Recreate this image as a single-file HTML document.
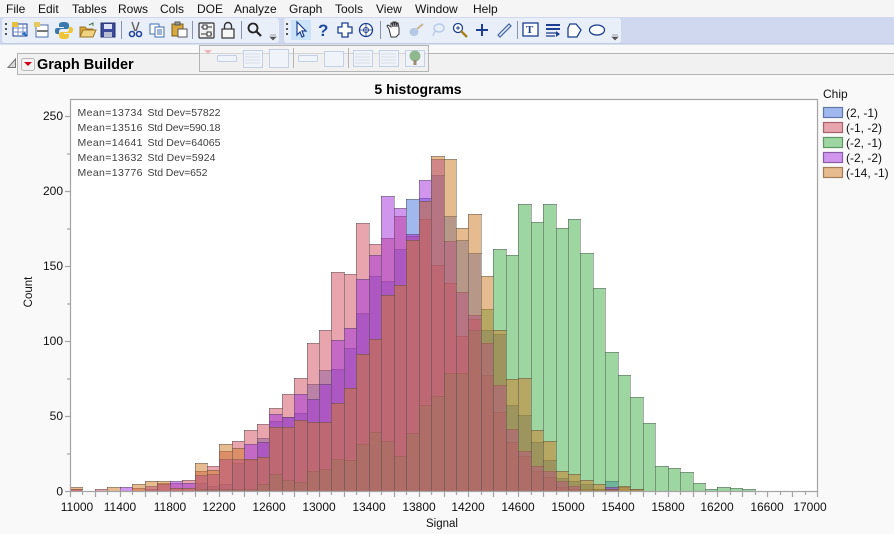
<!DOCTYPE html>
<html><head><meta charset="utf-8">
<style>
html,body{margin:0;padding:0;width:894px;height:534px;overflow:hidden;background:#f9f9f9;font-family:"Liberation Sans",sans-serif;color:#000}
.abs{position:absolute;white-space:pre}
#menu{position:absolute;left:0;top:0;width:894px;height:17px;background:#f5f5f5}
#menu span{position:absolute;top:2px;font-size:12px;line-height:14px;color:#111}
svg{position:absolute;left:0;top:0}
</style></head><body>
<div id="menu">
<span style="left:6px">File</span><span style="left:38px">Edit</span><span style="left:72px">Tables</span><span style="left:118px">Rows</span><span style="left:160px">Cols</span><span style="left:197px">DOE</span><span style="left:234px">Analyze</span><span style="left:289px">Graph</span><span style="left:335px">Tools</span><span style="left:376px">View</span><span style="left:415px">Window</span><span style="left:473px">Help</span>
</div>
<svg width="894" height="534" viewBox="0 0 894 534">
<!-- toolbar -->
<rect x="0" y="17" width="894" height="27" fill="#cfd8ee"/>
<rect x="2" y="18" width="277" height="25" rx="3" fill="#e9eff9"/>
<rect x="284" y="18" width="337" height="25" rx="3" fill="#e9eff9"/>
<rect x="0" y="43.500" width="894" height="1" fill="#b9c3dc"/>
<g fill="#555"><rect x="5" y="23" width="2" height="2"/><rect x="5" y="28" width="2" height="2"/><rect x="5" y="33" width="2" height="2"/><rect x="286" y="23" width="2" height="2"/><rect x="286" y="28" width="2" height="2"/><rect x="286" y="33" width="2" height="2"/></g>
<g fill="#8a93a8"><rect x="121" y="21" width="1" height="18"/><rect x="192" y="21" width="1" height="18"/><rect x="241" y="21" width="1" height="18"/><rect x="380" y="21" width="1" height="18"/><rect x="517" y="21" width="1" height="18"/></g>
<!-- table icons -->
<rect x="13" y="24" width="14" height="12" fill="#fff" stroke="#1c3f8f"/><path d="M13 28h14M13 32h14M18 24v12M23 24v12" stroke="#7a92c8" fill="none"/><rect x="12" y="22" width="6" height="5" fill="#e8c040"/><path d="M21 34l6 2-2-4z" fill="#1c6fc8"/>
<rect x="36" y="25" width="12" height="12" fill="#fff" stroke="#4a6fa8"/><rect x="34" y="22" width="6" height="5" fill="#e8c860"/><path d="M37 31h11" stroke="#777" stroke-width="2"/>
<!-- python -->
<path d="M64 22c-4 0-5 1-5 3v2h5v1h-7c-2 0-2 2-2 3s0 3 2 3h2v-2c0-2 1-3 3-3h5c1 0 2-1 2-2v-2c0-2-2-3-5-3z" fill="#3b78ad"/>
<path d="M64 39c4 0 5-1 5-3v-2h-5v-1h7c2 0 2-2 2-3s0-3-2-3h-2v2c0 2-1 3-3 3h-5c-1 0-2 1-2 2v2c0 2 2 3 5 3z" fill="#f0c437"/>
<!-- open -->
<path d="M80 27h5l2 2h6v8H80z" fill="#d9a93e" stroke="#9a7420"/><path d="M80 37l3-7h13l-3 7z" fill="#f0d280" stroke="#9a7420"/><path d="M89 25l4-2v3" stroke="#3a7a3a" fill="none"/>
<!-- save -->
<rect x="101" y="23" width="14" height="14" fill="#3c4a9c" stroke="#222c6c"/><rect x="104" y="24" width="8" height="5" fill="#dfe4f4"/><rect x="104" y="32" width="8" height="5" fill="#b8bdd0"/>
<!-- scissors -->
<path d="M132 22l3 9M139 22l-3 9" stroke="#666" stroke-width="1.500" fill="none"/><circle cx="132" cy="34" r="2.500" fill="none" stroke="#23449c" stroke-width="1.600"/><circle cx="139" cy="34" r="2.500" fill="none" stroke="#23449c" stroke-width="1.600"/>
<!-- copy -->
<rect x="150" y="24" width="9" height="10" fill="#fff" stroke="#3d6fb0"/><rect x="155" y="27" width="9" height="10" fill="#fff" stroke="#3d6fb0"/><path d="M157 30h5M157 32h5M157 34h5" stroke="#3d6fb0"/>
<!-- paste -->
<rect x="172" y="24" width="11" height="12" fill="#d9a93e" stroke="#7a5c18"/><rect x="175" y="22" width="5" height="3" fill="#999" stroke="#555"/><rect x="178" y="29" width="9" height="8" fill="#fff" stroke="#555"/>
<!-- tune -->
<rect x="199" y="23" width="15" height="15" rx="1" fill="#f2f2f2" stroke="#333" stroke-width="1.200"/><path d="M201 27h11M201 34h11" stroke="#333"/><rect x="203" y="25" width="4" height="4" fill="#fff" stroke="#333"/><rect x="207" y="32" width="4" height="4" fill="#fff" stroke="#333"/>
<!-- lock -->
<rect x="222" y="29" width="12" height="9" fill="#f6f6f6" stroke="#333" stroke-width="1.200"/><path d="M224.500 29v-3a3.500 3.500 0 0 1 7 0v3" fill="none" stroke="#333" stroke-width="1.400"/>
<!-- search -->
<circle cx="253" cy="28" r="4.500" fill="none" stroke="#222" stroke-width="1.800"/><path d="M256 31l5 5" stroke="#222" stroke-width="2.200"/>
<!-- dropdowns -->
<path d="M270 35h6M270 37h6l-3 3z" fill="#555" stroke="#555" stroke-width=".6"/>
<path d="M612 35h6M612 37h6l-3 3z" fill="#555" stroke="#555" stroke-width=".6"/>
<!-- arrow -->
<rect x="291" y="20" width="20" height="20" fill="#cbe3f9"/>
<path d="M297 22v13l3-3 2 5 2-1-2-5h4z" fill="#fff" stroke="#1c3f8f" stroke-width="1.200"/>
<!-- help -->
<text x="318" y="36" font-family="Liberation Sans" font-size="17" font-weight="bold" fill="#1d4a9e">?</text>
<!-- cross -->
<path d="M342 23h6v4h4v6h-4v4h-6v-4h-4v-6h4z" fill="#fff" stroke="#1c3f8f" stroke-width="1.300"/>
<!-- target -->
<circle cx="366" cy="30" r="6.500" fill="#fff" stroke="#1c3f8f" stroke-width="1.300"/><circle cx="366" cy="30" r="2.500" fill="none" stroke="#1c3f8f"/><path d="M366 24v12M360 30h12" stroke="#1c3f8f" stroke-width=".8"/>
<!-- hand -->
<path d="M389 29l-2-3 1-1 3 2v-4h1l1 4v-5h1l1 5v-5h1l1 5v-4h1l1 5v6l-3 3h-5z" fill="#fff" stroke="#333" stroke-width="1"/>
<!-- brush, lasso -->
<path d="M423 24l-6 5" stroke="#c9b48c" stroke-width="2"/><ellipse cx="414" cy="32" rx="4.500" ry="4" fill="#b5c9e6"/>
<ellipse cx="439" cy="28" rx="5" ry="4" fill="none" stroke="#b5c9e6" stroke-width="1.400"/><path d="M435 31l-2 5" stroke="#b5c9e6" stroke-width="1.400"/>
<!-- zoom -->
<circle cx="458" cy="28" r="4.500" fill="#fff" stroke="#1c3f8f" stroke-width="1.300"/><path d="M456 28h4M458 26v4" stroke="#1c3f8f"/><path d="M461 31l6 6" stroke="#a8801c" stroke-width="2.400"/>
<!-- crosshair -->
<path d="M482 24v12M476 30h12" stroke="#1c3f8f" stroke-width="2"/>
<!-- ruler -->
<path d="M498 35l11-11 2 2-11 11z" fill="#e8eef8" stroke="#3f62a8" stroke-width="1.200"/>
<!-- T -->
<rect x="523" y="23" width="15" height="13" fill="#fff" stroke="#1c3f8f" stroke-width="1.300"/><text x="526" y="33" font-family="Liberation Serif" font-size="11" font-weight="bold" fill="#1c3f8f">T</text>
<!-- list -->
<path d="M546 25h14M546 29h14" stroke="#1c3f8f" stroke-width="2"/><path d="M546 33h11M546 36h9" stroke="#1c3f8f" stroke-width="1.200"/><path d="M556 31l4 3-4 3z" fill="#1c3f8f"/>
<!-- poly -->
<path d="M570 24h6l5 6-4 7h-9v-9z" fill="#fff" stroke="#1c3f8f" stroke-width="1.300"/>
<!-- oval -->
<ellipse cx="597" cy="30" rx="7.500" ry="5" fill="#fff" stroke="#1c3f8f" stroke-width="1.300"/>

<!-- outline header -->
<rect x="17.500" y="53.500" width="877" height="21" fill="#f1f1f1" stroke="#b4b4b4"/>
<path d="M8 67.500L15.500 59v8.500z" fill="#d8d8d8" stroke="#777"/>
<rect x="21.500" y="58.500" width="13" height="12" rx="2" fill="#f3f3f3" stroke="#b8b8b8"/><path d="M24 62h8l-4 4z" fill="#d00018"/>
<text x="37" y="69" font-family="Liberation Sans" font-size="14.500" font-weight="bold" fill="#000">Graph Builder</text>
<!-- ghost toolbar -->
<rect x="199.500" y="45.500" width="229" height="26" fill="#f1f1f1" fill-opacity=".55" stroke="#b4b4b4"/>
<g fill="#f0f3f9" stroke="#c4d0e6">
<rect x="217.500" y="55.500" width="19" height="6" rx="1"/><rect x="243.500" y="50.500" width="19" height="17"/><rect x="269.500" y="49.500" width="19" height="18"/><rect x="298.500" y="55.500" width="19" height="6" rx="1"/><rect x="324.500" y="51.500" width="19" height="15"/><rect x="353.500" y="50.500" width="19" height="16"/><rect x="379.500" y="50.500" width="19" height="16"/><rect x="405.500" y="50.500" width="19" height="16"/>
</g>
<path d="M245 54h15M245 57h15M245 60h15M245 63h15M355 54h15M355 57h15M355 60h15M355 63h15M381 54h15M381 57h15M381 60h15M381 63h15" stroke="#d8dde6"/>
<path d="M293.500 48v20M348.500 48v20" stroke="#b4b4b4"/>
<path d="M204 50h8l-4 4z" fill="#eeb4bc"/>
<circle cx="415" cy="56" r="5.500" fill="#8fb88f"/><rect x="413.500" y="60" width="3" height="5" fill="#9c8a70"/>

<!-- plot -->
<rect x="70.500" y="99.500" width="747" height="392" fill="#fff"/>
<g id="bars"></g>
<rect x="70.500" y="99.500" width="747" height="392" fill="none" stroke="#a4a4a4" stroke-width="1.200"/>
<g id="ticks" stroke="#a4a4a4" stroke-width="1.200"></g>
<g font-family="Liberation Sans" font-size="12" fill="#111" text-anchor="end">
<text x="63" y="120">250</text><text x="63" y="195">200</text><text x="63" y="270">150</text><text x="63" y="345">100</text><text x="63" y="420">50</text><text x="63" y="495.500">0</text>
</g>
<g font-family="Liberation Sans" font-size="12" fill="#111" text-anchor="middle">
<text x="77" y="511">11000</text><text x="120" y="511">11400</text><text x="170" y="511">11800</text><text x="219" y="511">12200</text><text x="269" y="511">12600</text><text x="319" y="511">13000</text><text x="369" y="511">13400</text><text x="419" y="511">13800</text><text x="468" y="511">14200</text><text x="518" y="511">14600</text><text x="568" y="511">15000</text><text x="618" y="511">15400</text><text x="668" y="511">15800</text><text x="717" y="511">16200</text><text x="767" y="511">16600</text><text x="810" y="511">17000</text>
</g>
<text x="442" y="527" font-family="Liberation Sans" font-size="11.500" fill="#111" text-anchor="middle">Signal</text>
<text transform="translate(32 292) rotate(-90)" font-family="Liberation Sans" font-size="11.500" fill="#111" text-anchor="middle">Count</text>
<text x="418" y="94" font-family="Liberation Sans" font-size="14" font-weight="bold" fill="#000" text-anchor="middle">5 histograms</text>
<g font-family="Liberation Sans" font-size="10.500" fill="#404040">
<text x="77.500" y="116" textLength="65">Mean=13734</text><text x="147.500" y="116" textLength="73">Std Dev=57822</text>
<text x="77.500" y="131" textLength="65">Mean=13516</text><text x="147.500" y="131" textLength="73">Std Dev=590.18</text>
<text x="77.500" y="146" textLength="65">Mean=14641</text><text x="147.500" y="146" textLength="73">Std Dev=64065</text>
<text x="77.500" y="161" textLength="65">Mean=13632</text><text x="147.500" y="161" textLength="68">Std Dev=5924</text>
<text x="77.500" y="176" textLength="65">Mean=13776</text><text x="147.500" y="176" textLength="60">Std Dev=652</text>
</g>
<!-- legend -->
<text x="823" y="98" font-family="Liberation Sans" font-size="12" fill="#111">Chip</text>
<rect x="823.500" y="107.500" width="19" height="10" fill="#a0b8ee" stroke="#5f78a8" stroke-width="1.200"/>
<rect x="823.500" y="122.500" width="19" height="10" fill="#e8a5ae" stroke="#a8626c" stroke-width="1.200"/>
<rect x="823.500" y="137.500" width="19" height="10" fill="#9ed6a2" stroke="#5f9464" stroke-width="1.200"/>
<rect x="823.500" y="152.500" width="19" height="10" fill="#d096ee" stroke="#8a5ca8" stroke-width="1.200"/>
<rect x="823.500" y="167.500" width="19" height="10" fill="#e6bb90" stroke="#a27e58" stroke-width="1.200"/>
<g font-family="Liberation Sans" font-size="12" fill="#111">
<text x="846" y="117">(2, -1)</text><text x="846" y="132">(-1, -2)</text><text x="846" y="147">(-2, -1)</text><text x="846" y="162">(-2, -2)</text><text x="846" y="177">(-14, -1)</text>
</g>
</svg>
<script>
(function(){
var N=491;
var S={
b:{c:'65,113,221',t:{10:483,11:486,12:484,13:463,14:460,15:438,16:421,17:417,18:413,19:384,20:370,21:369,22:348,23:313,24:276,25:281,26:249,27:199,28:198,29:175,30:216,31:240,32:253,33:330,34:334,35:405,36:415,37:442,38:460,39:478,40:481,41:484,42:489,43:481}},
p:{c:'209,75,93',t:{0:489,2:489,5:488,6:489,7:483,8:483,9:480,10:471,11:466,12:451,13:441,14:430,15:424,16:408,17:394,18:378,19:343,20:330,21:272,22:274,23:223,24:244,25:238,26:216,27:236,28:219,29:265,30:283,31:336,32:319,33:375,34:412,35:442,36:456,37:471,38:477,39:487,40:489,41:489,42:489,43:489,44:487,45:489}},
g:{c:'61,173,69',t:{10:489,11:489,12:489,13:489,14:489,15:484,16:474,17:480,18:482,19:471,20:469,21:459,22:460,23:444,24:432,25:441,26:456,27:433,28:405,29:396,30:373,31:373,32:330,33:309,34:249,35:255,36:204,37:222,38:204,39:228,40:219,41:253,42:288,43:352,44:375,45:397,46:423,47:466,48:468,49:472,50:483,51:489,52:487,53:488,54:489}},
u:{c:'161,45,221',t:{0:489,4:487,6:486,7:484,8:481,9:483,10:475,11:474,12:459,13:459,14:444,15:442,16:414,17:417,18:394,19:399,20:384,21:340,22:328,23:279,24:255,25:196,26:208,27:234,28:180,29:159,30:241,31:292,32:315,33:343,34:385,35:429,36:451,37:466,38:471,39:481,40:486,43:487}},
o:{c:'205,119,33',t:{0:487,3:487,5:484,6:481,7:481,8:488,9:488,10:463,11:470,12:444,13:448,14:459,15:457,16:427,17:427,18:420,19:422,20:422,21:403,22:388,23:354,24:339,25:295,26:285,27:240,28:201,29:156,30:159,31:228,32:214,33:276,34:330,35:379,36:378,37:430,38:441,39:471,40:474,41:480,42:484,43:489,44:486,45:489}}
};
function X(i){return Math.floor(70.5+12.45*i)}
var h='',minT={};
['b','p','g','u','o'].forEach(function(k){
var s=S[k];
for(var i in s.t){i=+i;var y=s.t[i];
if(!(minT[i]<=y))minT[i]=y;
h+='<rect x="'+X(i)+'" y="'+y+'" width="'+(X(i+1)-X(i))+'" height="'+(N-y)+'" fill="rgba('+s.c+',.5)"/>';
h+='<rect x="'+X(i)+'" y="'+y+'" width="'+(X(i+1)-X(i)+1)+'" height="1" fill="rgba(70,70,70,.42)"/>';
}});
for(var i=0;i<=56;i++){
var a=minT[i-1],b=minT[i],m=Math.min(a===undefined?N:a,b===undefined?N:b);
if(m<N)h+='<rect x="'+X(i)+'" y="'+m+'" width="1" height="'+(N-m)+'" fill="rgba(70,70,70,.45)"/>';
}
document.getElementById('bars').innerHTML=h;
var t='';
for(var i=0;i<=60;i++){var x=X(i)+.5;if(i==60)x=817.5;t+='<path d="M'+x+' 491v'+(i%2?4:6)+'"/>';}
var ys=[491.5,454,416.5,379,341.5,304,266.5,229,191.5,154,116.5];
ys.forEach(function(y,j){t+='<path d="M70 '+y+'h'+(j%2?-3:-5)+'"/>';});
document.getElementById('ticks').innerHTML=t;
})();
</script>
</body></html>
